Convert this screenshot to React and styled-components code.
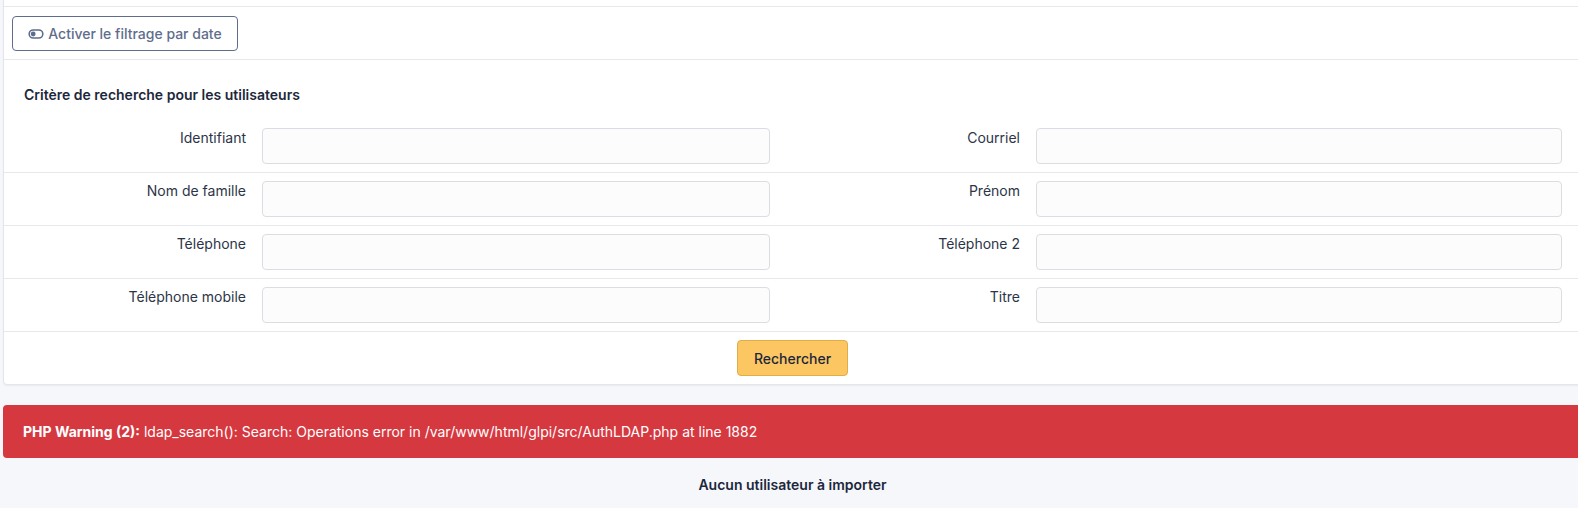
import styled, { createGlobalStyle } from 'styled-components';

const GlobalStyle = createGlobalStyle`
  html, body {
    margin: 0;
    padding: 0;
    background: #f5f7fb;
    overflow: hidden;
  }
  body {
    font-family: Inter, "Noto Sans", sans-serif;
    font-size: 14px;
    color: #1d273b;
  }
`;

const fields = [
  ['Identifiant', 'Courriel'],
  ['Nom de famille', 'Prénom'],
  ['Téléphone', 'Téléphone 2'],
  ['Téléphone mobile', 'Titre'],
];

export default function App() {
  return (
    <Page>
      <GlobalStyle />
      <Card>
        <TopStrip />
        <Toolbar>
          <OutlineButton>
            <ToggleIcon />
            Activer le filtrage par date
          </OutlineButton>
        </Toolbar>
        <Title>Critère de recherche pour les utilisateurs</Title>
        {fields.map(([left, right]) => (
          <FieldRow key={left}>
            <Label>{left}</Label>
            <InputCell><Input /></InputCell>
            <Label>{right}</Label>
            <InputCell><Input /></InputCell>
          </FieldRow>
        ))}
        <Footer>
          <SearchButton>Rechercher</SearchButton>
        </Footer>
      </Card>
      <Alert>
        <strong>PHP Warning (2):</strong> ldap_search(): Search: Operations error in /var/www/html/glpi/src/AuthLDAP.php at line 1882
      </Alert>
      <Empty>Aucun utilisateur à importer</Empty>
    </Page>
  );
}

function ToggleIcon() {
  return (
    <svg width="16" height="16" viewBox="0 0 16 16" fill="none">
      <rect x="1.2" y="4" width="13.6" height="8" rx="4" stroke="currentColor" strokeWidth="1.6" />
      <circle cx="5.2" cy="8" r="2.4" fill="currentColor" />
    </svg>
  );
}

const Page = styled.div`
  padding-left: 3px;
  width: 1600px;
`;

const Card = styled.div`
  margin-top: -10px;
  background: #fff;
  border: 1px solid #e3e6ea;
  border-radius: 4px;
  box-shadow: 0 1px 2px rgba(29, 39, 59, 0.06);
`;

const TopStrip = styled.div`
  height: 15px;
  border-bottom: 1px solid #e6e8eb;
`;

const Toolbar = styled.div`
  display: flex;
  padding: 9px 8px 8px;
  border-bottom: 1px solid #e6e8eb;
`;

const OutlineButton = styled.button`
  display: flex;
  align-items: center;
  gap: 4px;
  height: 35px;
  width: 226px;
  justify-content: center;
  padding: 0 12px;
  background: #fff;
  border: 1px solid #5f6d8c;
  border-radius: 4px;
  color: #5f6d8c;
  font-family: Inter, sans-serif;
  font-size: 14px;
  font-weight: 500;
`;

const Title = styled.div`
  height: 60px;
  display: flex;
  align-items: center;
  padding: 10px 20px 0;
  font-weight: 600;
  font-size: 14px;
  line-height: 20px;
  box-sizing: border-box;
`;

const FieldRow = styled.div`
  display: grid;
  grid-template-columns: 250px 524px 250px 542px;
  border-bottom: 1px solid #e6e8eb;
`;

const Label = styled.div`
  text-align: right;
  padding: 8px;
  line-height: 20px;
  color: #2c3547;
  font-size: 14px;
`;

const InputCell = styled.div`
  padding: 8px;
`;

const Input = styled.div`
  height: 34px;
  border: 1px solid #dadde2;
  border-radius: 4px;
  background: #fcfcfd;
`;

const Footer = styled.div`
  display: flex;
  justify-content: center;
  padding: 8px 0;
  width: 1577px;
`;

const SearchButton = styled.button`
  height: 36px;
  width: 111px;
  background: #fcc762;
  border: 1px solid #e2ac46;
  border-radius: 4px;
  color: #1d273b;
  font-family: Inter, sans-serif;
  font-size: 14px;
  font-weight: 500;
`;

const Alert = styled.div`
  margin-top: 20px;
  height: 53px;
  box-sizing: border-box;
  display: flex;
  align-items: center;
  padding: 0 20px;
  background: #d63840;
  color: #fff;
  border-radius: 4px;
  font-size: 14px;
  white-space: pre;

  strong {
    font-weight: 700;
  }
`;

const Empty = styled.div`
  width: 1579px;
  text-align: center;
  padding-top: 18px;
  font-weight: 600;
  font-size: 14px;
`;
